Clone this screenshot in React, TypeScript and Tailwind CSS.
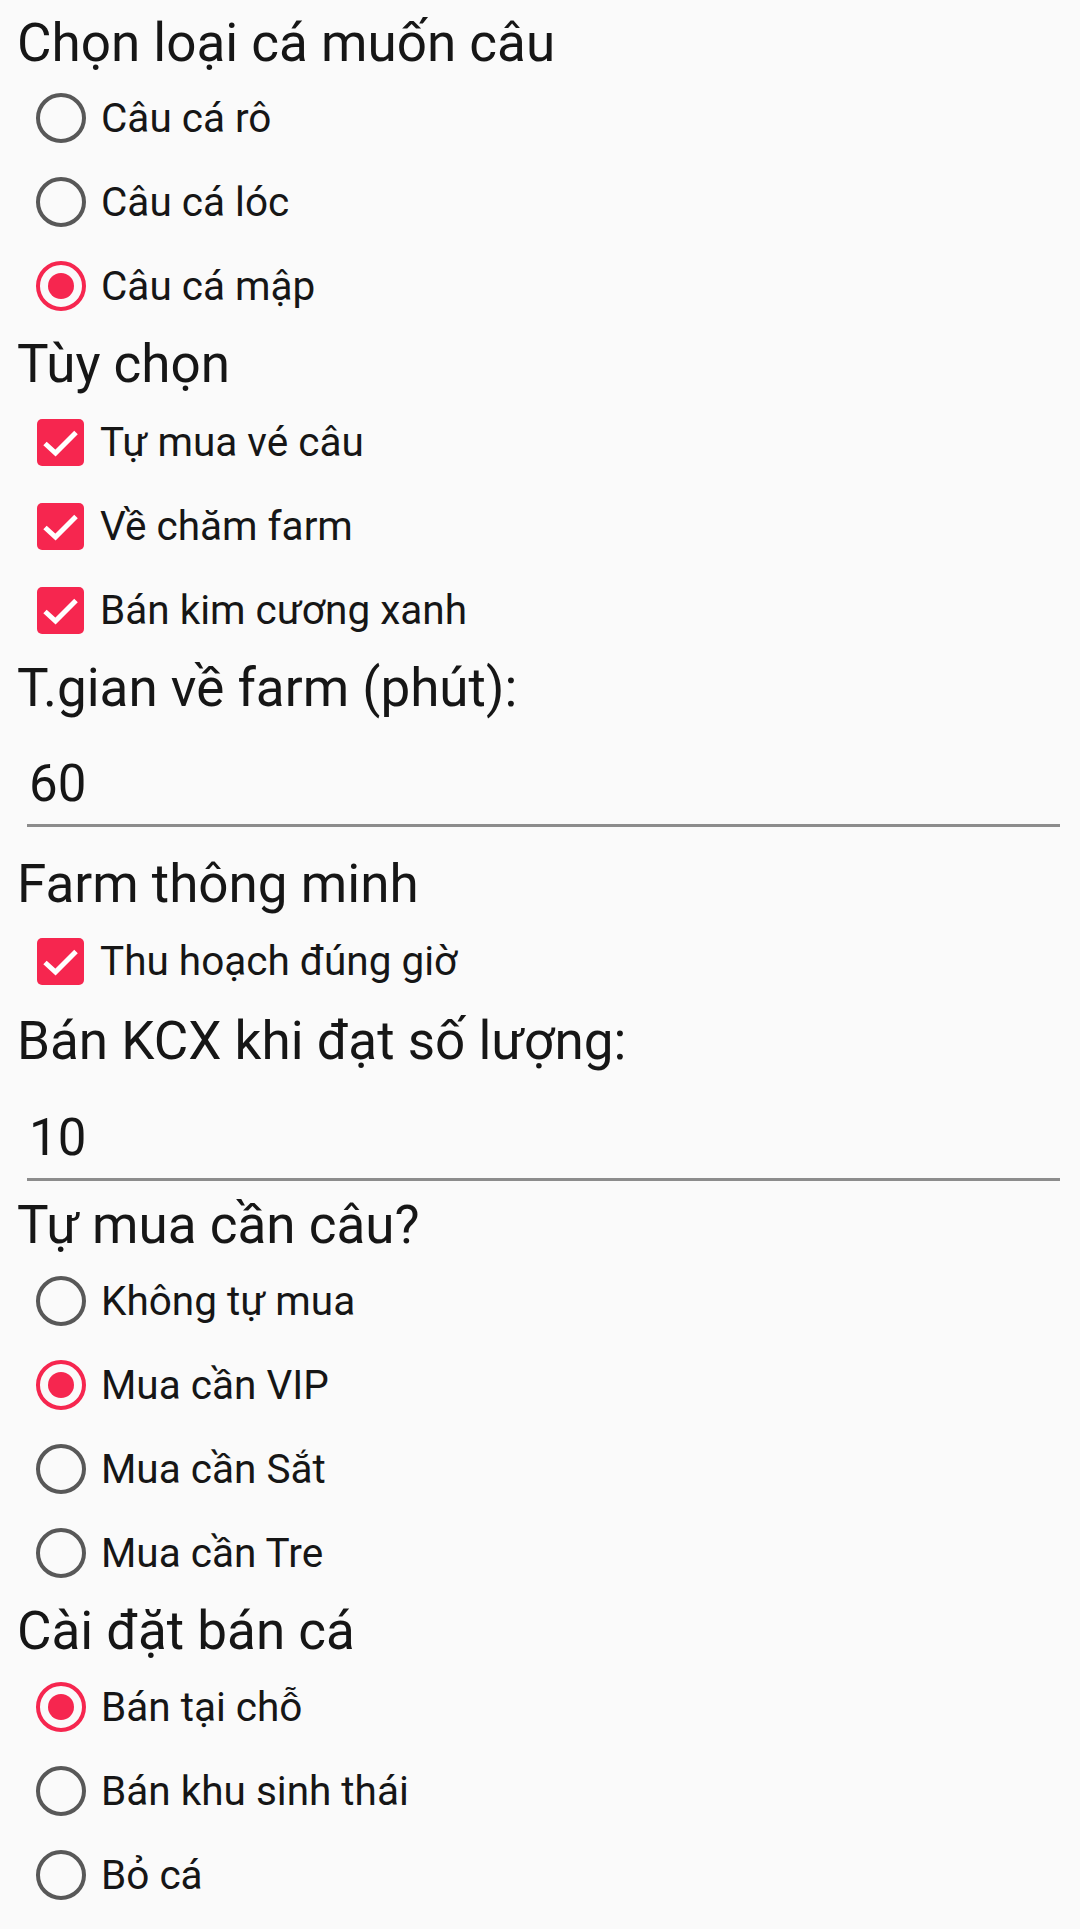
import React from "react";

function Title({ children, className = "" }: { children: React.ReactNode; className?: string }) {
  return <div className={"text-[53px] leading-[64px] h-[64px] whitespace-nowrap " + className}>{children}</div>;
}

function Radio({ label, checked }: { label: string; checked?: boolean }) {
  return (
    <div className="flex h-[84px] items-center">
      <span
        className={
          "ml-[19px] flex h-[50px] w-[50px] shrink-0 items-center justify-center rounded-full border-[4px] " +
          (checked ? "border-[#f6264f]" : "border-[#585858]")
        }
      >
        {checked && <span className="h-[26px] w-[26px] rounded-full bg-[#f6264f]" />}
      </span>
      <span className="ml-[15px] text-[40.5px] leading-[48px] whitespace-nowrap">{label}</span>
    </div>
  );
}

function Check({ label }: { label: string }) {
  return (
    <div className="flex h-[84px] items-center">
      <span className="ml-[20px] flex h-[47px] w-[47px] shrink-0 items-center justify-center rounded-[5px] bg-[#f6264f]">
        <svg width="47" height="47" viewBox="0 0 47 47">
          <path d="M8 24.5 L18.5 34 L39 13.5" fill="none" stroke="#ffffff" strokeWidth="5" strokeLinejoin="miter" />
        </svg>
      </span>
      <span className="ml-[16px] text-[40.5px] leading-[48px] whitespace-nowrap">{label}</span>
    </div>
  );
}

function Field({ value, className = "" }: { value: string; className?: string }) {
  return (
    <div className={"ml-[10px] border-b-[3px] border-[#8c8c8c] pb-[14px] pl-[2px] " + className}>
      <div className="text-[51px] leading-[52px] h-[52px]">{value}</div>
    </div>
  );
}

export default function App() {
  return (
    <div
      className="min-h-[1929px] w-[1080px] bg-[#fafafa] pt-[11px] pl-[17px] pr-[20px] text-[#161616]"
      style={{ fontFamily: "Roboto, 'Noto Sans', 'Liberation Sans', sans-serif" }}
    >
      <Title>Chọn loại cá muốn câu</Title>
      <div className="mt-[1px] flex flex-col">
        <Radio label="Câu cá rô" />
        <Radio label="Câu cá lóc" />
        <Radio label="Câu cá mập" checked />
      </div>

      <Title className="mt-[4px]">Tùy chọn</Title>
      <div className="mt-[4px] flex flex-col">
        <Check label="Tự mua vé câu" />
        <Check label="Về chăm farm" />
        <Check label="Bán kim cương xanh" />
      </div>

      <Title className="mt-[4px]">T.gian về farm (phút):</Title>
      <Field value="60" className="mt-[38px]" />

      <Title className="mt-[25px]">Farm thông minh</Title>
      <div className="mt-[3px] flex flex-col">
        <Check label="Thu hoạch đúng giờ" />
      </div>

      <Title className="mt-[6px]">Bán KCX khi đạt số lượng:</Title>
      <Field value="10" className="mt-[39px]" />

      <Title className="mt-[12px]">Tự mua cần câu?</Title>
      <div className="mt-[2px] flex flex-col">
        <Radio label="Không tự mua" />
        <Radio label="Mua cần VIP" checked />
        <Radio label="Mua cần Sắt" />
        <Radio label="Mua cần Tre" />
      </div>

      <Title className="mt-[4px]">Cài đặt bán cá</Title>
      <div className="mt-[2px] flex flex-col">
        <Radio label="Bán tại chỗ" checked />
        <Radio label="Bán khu sinh thái" />
        <Radio label="Bỏ cá" />
      </div>
    </div>
  );
}
